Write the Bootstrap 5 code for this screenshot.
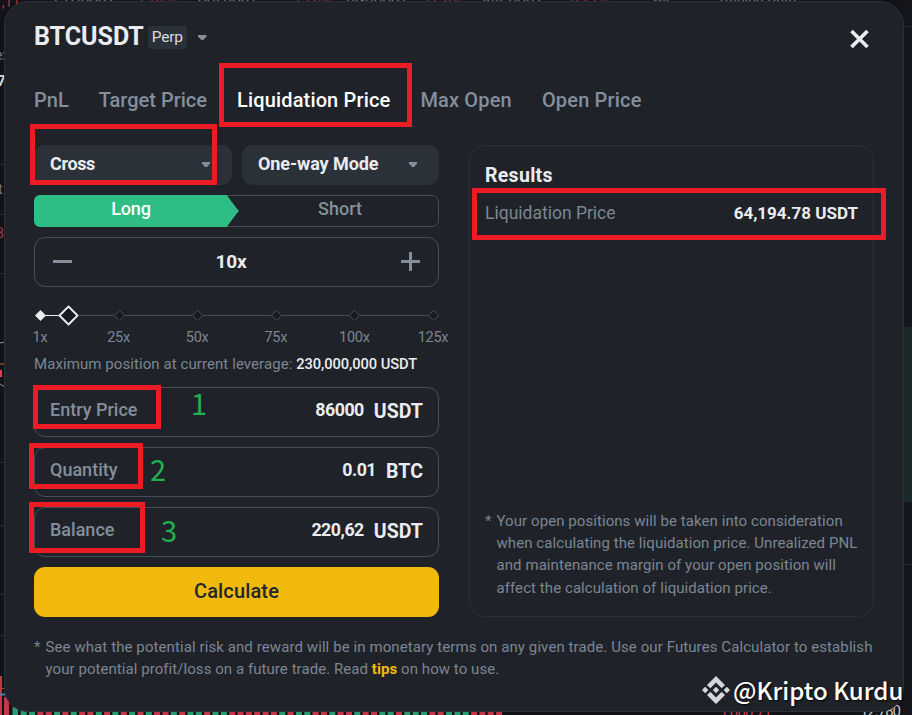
<!DOCTYPE html>
<html lang="en">
<head>
<meta charset="utf-8">
<meta name="viewport" content="width=device-width, initial-scale=1">
<title>Futures Calculator</title>
<link href="https://cdn.jsdelivr.net/npm/bootstrap@5.3.0/dist/css/bootstrap.min.css" rel="stylesheet">
<style>
:root{--panel:#1f2329;--field:#2b3139;--line:#474d57;--muted:#848e9c;--soft:#7c8593;--bright:#eaecef;--gold:#f0b90b}
body{background:#14151a;font-family:Roboto,"Liberation Sans",sans-serif;color:var(--bright);width:912px;height:715px;overflow:hidden}
.backdrop-art{position:absolute;inset:0}
.calc{position:relative;width:900px;height:711px;margin:1px 0 0 4px;padding:0 28px 0 29px;background:var(--panel);border:1px solid #2b3037;border-radius:24px}
.calc-head{height:70px}
.pair{font-size:25px;font-weight:700;letter-spacing:-.02px;line-height:30px}
.perp{font-size:15.5px;letter-spacing:-.2px;line-height:23px;width:39px;background:var(--field);border-radius:3px;color:#d8dce1}
.calc-tabs{height:58px;gap:30px;font-size:20px;font-weight:500;color:var(--muted);line-height:56px;white-space:nowrap}
.calc-tabs .on{color:#fff;letter-spacing:.15px}
.calc-tabs .on~span{letter-spacing:.17px}
.main-grid{margin-top:15px;gap:30px}
.side{width:405px;height:472px}
.drop{width:197px;height:40px;background:var(--field);border-radius:10px;padding:0 20px 3px 16px;font-size:18px;font-weight:700;letter-spacing:-.07px}
.drops{gap:10px}
#margin-mode{width:198px;letter-spacing:-.35px}
.direction{height:32px;margin-top:10px;border:1px solid var(--line);border-radius:7px;font-size:18px;font-weight:500;color:var(--muted)}
.direction .long{width:205px;margin:-1px 0 -1px -1px;padding-right:11px;background:#2ebd85;color:#fff;border-radius:6px 0 0 6px;clip-path:polygon(0 0,94% 0,99% 43%,100% 50%,99% 57%,94% 100%,0 100%);letter-spacing:-.2px;line-height:28px}
.direction .short{line-height:26px;padding-left:3px}
.field{height:50px;border:1px solid var(--line);border-radius:11px;padding:0 15px}
.field+.field{margin-top:10px}
.lever{margin-top:10px;padding:0 18px}
.lever b{font-size:19px;letter-spacing:-.2px;margin-right:11px}
.scale{margin-top:13px;height:30px;display:block}
.marks{height:20px;margin:0 -14px;font-size:14.5px;color:var(--soft);letter-spacing:-.25px;line-height:16px}
.marks span{width:40px;text-align:center}
.maxpos{height:23px;margin:2px 0 12px;font-size:15px;letter-spacing:.08px;line-height:24px;color:var(--soft);white-space:nowrap}
.maxpos b{font-weight:500;font-size:14.7px;letter-spacing:-.08px;color:var(--bright)}
.field .name{font-size:18px;font-weight:500;color:var(--muted);line-height:44px}
.field .val{font-size:17.8px;font-weight:700;letter-spacing:-.5px;line-height:44px}
.field .unit{font-size:19.5px;font-weight:700;letter-spacing:.05px;line-height:47px;margin-left:10px}
.calculate{height:50px;margin-top:10px;background:var(--gold);color:#202630;border:0;border-radius:11px;font-size:20px;font-weight:500;letter-spacing:.14px;padding:0 0 2px}
.results{border:1px solid #2b3037;border-radius:16px;padding:16px 15px 17px}
.results h2{font-size:19.5px;font-weight:700;letter-spacing:.3px;line-height:27px;margin:0}
.results .price{font-size:17.5px;line-height:24px;margin-top:12px}
.results .price span{color:var(--soft)}
.results .price b{font-size:17px}
.note{font-size:15px;line-height:22.3px;color:var(--soft);letter-spacing:.07px}
.note i{font-style:normal;width:11.5px;flex:none}
.note div{white-space:nowrap}
.foot{margin-top:19px;line-height:22px;letter-spacing:.09px}
.foot b{color:var(--gold)}
.second-line{letter-spacing:.06px}
.frame{position:absolute;border:5px solid #ed1c24}
.step{position:absolute;font:29px/30px "Noto Sans CJK SC",sans-serif;color:#22b14c}
.f1{left:219px;top:63px;width:193px;height:64px}
.f2{left:30px;top:124px;width:187px;height:61px}
.f3{left:472px;top:188px;width:414px;height:52px}
.f4{left:33px;top:385px;width:128px;height:44px}
.f5{left:29px;top:443px;width:114px;height:46px}
.f6{left:29px;top:502px;width:116px;height:51px}
.s1{left:191px;top:387px}.s2{left:150px;top:453px}.s3{left:161px;top:514px}
.credit{position:absolute;left:702px;top:672px;gap:3px;font:500 24.100px/36px "Noto Sans CJK SC","Noto Sans",sans-serif;color:#fff;text-shadow:1px 1px 2px #000;white-space:nowrap}
</style>
</head>
<body>
<svg class="backdrop-art" width="912" height="715" font-family="Roboto,sans-serif">
  <rect width="912" height="715" fill="#121319"/>
  <rect x="903" width="9" height="715" fill="#15161b"/>
  <g font-size="14" fill="#777d87">
    <text x="-14" y="7" fill="#b23245">97,11</text>
    <text x="54" y="3">ETHUSDT</text><text x="135" y="3" fill="#a12c3c">-2.37%</text><text x="198" y="3">SOLUSDT</text><text x="290" y="3" fill="#a12c3c">-1.28%</text>
    <text x="346" y="3">BNBUSDT</text><text x="424" y="3" fill="#a12c3c">+2.0%</text><text x="482" y="3">XRPUSDT</text><text x="567" y="3" fill="#a12c3c">-3.21%</text><text x="653" y="3">All</text><text x="717" y="3">Trading Data</text>
    <text x="-5" y="60">ex</text><text x="-3" y="86" font-size="15" font-weight="700" fill="#d6d9dd">7</text><text x="-2" y="194">t</text><text x="-4" y="238" fill="#b23245">8</text>
  </g>
  <path d="M0 164.500H5M0 214.500H5M0 273.500H5M0 462.500H5M0 525.500H5M0 594.500H5M0 635.500H5M904 26.500H912M904 564.500H912" stroke="#282b31"/>
  <path d="M0 343l5-1" stroke="#8b929d"/><path d="M0 364h5" stroke="#b5704a"/><path d="M0 384l5 3" stroke="#8b929d"/><rect y="370" width="2" height="7" fill="#e33b52"/>
  <rect x="904" y="327" width="8" height="175" fill="#192a29"/>
  <rect y="676" width="2" height="39" fill="#c73648"/><path d="M0 688.500H5" stroke="#c73648"/><path d="M0 694.500H5" stroke="#4f86ad" stroke-width="2"/>
  <path d="M4 697h5v18H4z" fill="#c73648"/><path d="M12.500 707h5.500v8h-5.500z" fill="#2a9d70"/>
  <g id="volume"></g>
  <g font-size="15"><text x="720" y="717" fill="#c73648" textLength="52">1,000.71</text><text x="860" y="716" fill="#c5c9cf" textLength="41">12.780</text></g>
</svg>

<main class="calc">
  <header class="calc-head d-flex justify-content-between align-items-center">
    <div class="d-flex align-items-center">
      <span class="pair">BTCUSDT</span>
      <span class="perp text-center ms-1">Perp</span>
      <svg class="ms-2" width="14" height="10"><path d="M3 3h8.500v1.500L8.300 8H6.300L3 4.500z" fill="#848e9c"/></svg>
    </div>
    <svg width="30" height="30" class="mt-1"><path d="M6.500 7l16 16M22.500 7l-16 16" stroke="#eaecef" stroke-width="3.600"/></svg>
  </header>
  <nav class="calc-tabs d-flex">
    <span>PnL</span><span>Target Price</span><span class="on">Liquidation Price</span><span>Max Open</span><span>Open Price</span>
  </nav>

  <div class="main-grid d-flex">
    <section class="side">
      <div class="drops d-flex">
        <div class="drop d-flex align-items-center justify-content-between" id="margin-mode">Cross<svg width="12" height="8"><path d="M2 2h8v1.500L7 7H5L2 3.500z" fill="#848e9c"/></svg></div>
        <div class="drop d-flex align-items-center justify-content-between" id="position-mode">One-way Mode<svg width="12" height="8"><path d="M2 2h8v1.500L7 7H5L2 3.500z" fill="#848e9c"/></svg></div>
      </div>
      <div class="direction d-flex text-center"><div class="long">Long</div><div class="short flex-fill">Short</div></div>
      <div class="field lever d-flex align-items-center justify-content-between">
        <svg width="19" height="20"><path d="M0 9.500h19" stroke="#848e9c" stroke-width="3"/></svg>
        <b>10x</b>
        <svg width="19" height="20"><path d="M0 9.500h19M9.500 0v19" stroke="#848e9c" stroke-width="3"/></svg>
      </div>
      <svg class="scale" width="405" height="30">
        <path d="M6 15.500H399" stroke="#474d57"/><path d="M6 15.500H34" stroke="#eaecef"/>
        <g fill="#181a20" stroke="#474d57"><path d="M85.500 10.500l5 5-5 5-5-5zM163.500 10.500l5 5-5 5-5-5zM242.500 10.500l5 5-5 5-5-5zM320.500 10.500l5 5-5 5-5-5zM399.500 10.500l5 5-5 5-5-5z"/></g>
        <path d="M6.500 10l5.500 5.500-5.500 5.500L1 15.500z" fill="#eaecef"/>
        <path d="M34.500 6.500l9 9-9 9-9-9z" fill="#181a20" stroke="#eaecef" stroke-width="1.800" stroke-linejoin="round"/>
      </svg>
      <div class="marks d-flex justify-content-between"><span>1x</span><span>25x</span><span>50x</span><span>75x</span><span>100x</span><span>125x</span></div>
      <div class="maxpos">Maximum position at current leverage: <b>230,000,000 USDT</b></div>
      <div class="field d-flex"><span class="name me-auto">Entry Price</span><span class="val">86000</span><span class="unit">USDT</span></div>
      <div class="field d-flex"><span class="name me-auto">Quantity</span><span class="val">0.01</span><span class="unit">BTC</span></div>
      <div class="field d-flex"><span class="name me-auto">Balance</span><span class="val">220,62</span><span class="unit">USDT</span></div>
      <button class="calculate btn w-100">Calculate</button>
    </section>

    <section class="side results d-flex flex-column">
      <h2>Results</h2>
      <div class="price d-flex justify-content-between"><span>Liquidation Price</span><b>64,194.78 USDT</b></div>
      <div class="note d-flex mt-auto"><i>*</i><div>Your open positions will be taken into consideration<br>when calculating the liquidation price. Unrealized PNL<br>and maintenance margin of your open position will<br>affect the calculation of liquidation price.</div></div>
    </section>
  </div>
  <footer class="note foot d-flex"><i>*</i><div>See what the potential risk and reward will be in monetary terms on any given trade. Use our Futures Calculator to establish<br><span class="second-line">your potential profit/loss on a future trade. Read <b>tips</b> on how to use.</span></div></footer>
</main>

<div class="frame f1"></div><div class="frame f2"></div><div class="frame f3"></div><div class="frame f4"></div><div class="frame f5"></div><div class="frame f6"></div>
<span class="step s1">1</span><span class="step s2">2</span><span class="step s3">3</span>
<div class="credit d-flex align-items-center">
  <svg width="28" height="28" viewBox="0 0 28 28" fill="#d3d6db"><path d="M14 0l9 9-3.300 3.300L14 6.600l-5.700 5.700L5 9zM14 28l9-9-3.300-3.300-5.700 5.700-5.700-5.700L5 19zM14 10.800l3.200 3.200-3.200 3.200-3.200-3.200zM3.200 10.800L6.400 14l-3.200 3.200L0 14zM24.800 10.800L28 14l-3.200 3.200-3.200-3.200z"/></svg>
  <span>@Kripto Kurdu</span>
</div>
<script src="https://cdn.jsdelivr.net/npm/bootstrap@5.3.0/dist/js/bootstrap.bundle.min.js"></script>
<script>
// Volume bars along the chart's lower edge: g = up, r = down
document.getElementById("volume").innerHTML = [..."ggrrgrgrrgrgrgrgrrgrggrggrrrrrrgrggrrgrrgrrggrgggrrgggrrrr"]
  .map((c, i) => `<rect x="${(20.7 + i * 8.34).toFixed(1)}" y="704" width="6" height="11" fill="${c === "g" ? "#2a9d70" : "#c73648"}"/>`).join("");
</script>
</body>
</html>
